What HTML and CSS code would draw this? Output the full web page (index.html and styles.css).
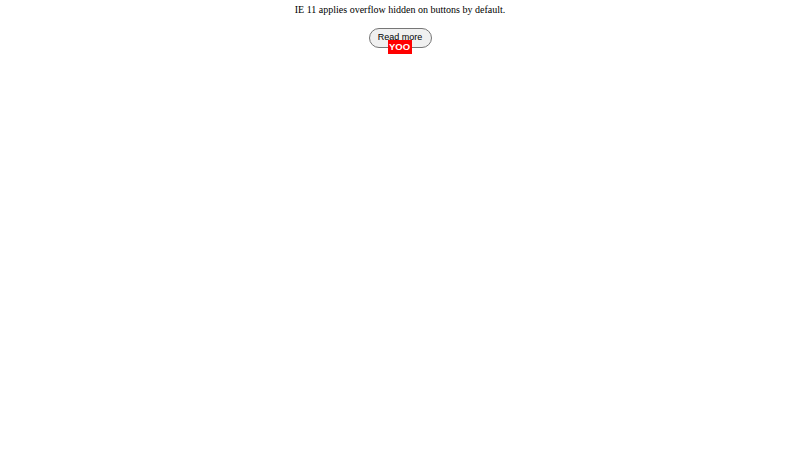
FILE: index.html
```html
<!DOCTYPE html>
<html>
<head>
<meta charset="utf-8">
<link rel="stylesheet" href="styles.css">
</head>
<body>
<main class="page">
  <p class="note">IE 11 applies overflow hidden on buttons by default.</p>
  <div class="holder">
    <span class="btn">Read more</span>
    <span class="badge">YOO</span>
  </div>
</main>
</body>
</html>
```
FILE: styles.css
```css
html, body { margin: 0; padding: 0; background: #ffffff; }
html { height: 100%; }
body { min-height: 100%; }
.page {
  display: flex;
  flex-direction: column;
  align-items: center;
  font-family: "Liberation Serif", serif;
  color: #000;
  padding-top: 3px;
  min-height: 440px;
}
.note { margin: 0; font-size: 10px; line-height: 14px; }
.holder { position: relative; margin-top: 11px; width: 63px; height: 20px; }
.btn {
  box-sizing: border-box;
  display: flex;
  align-items: center;
  justify-content: center;
  padding-bottom: 2px;
  white-space: nowrap;
  font-family: "Liberation Sans", Arial, sans-serif;
  font-size: 9px;
  color: #000;
  background: #f0f0f0;
  border: 1px solid #767676;
  border-radius: 10px;
  height: 20px;
  width: 63px;
}
.badge {
  position: absolute;
  left: 19px;
  top: 12px;
  width: 24px;
  height: 14px;
  background: #ff0000;
  color: #ffffff;
  font-family: "Liberation Sans", Arial, sans-serif;
  font-weight: bold;
  font-size: 9.5px;
  line-height: 14px;
  text-align: center;
}
```
